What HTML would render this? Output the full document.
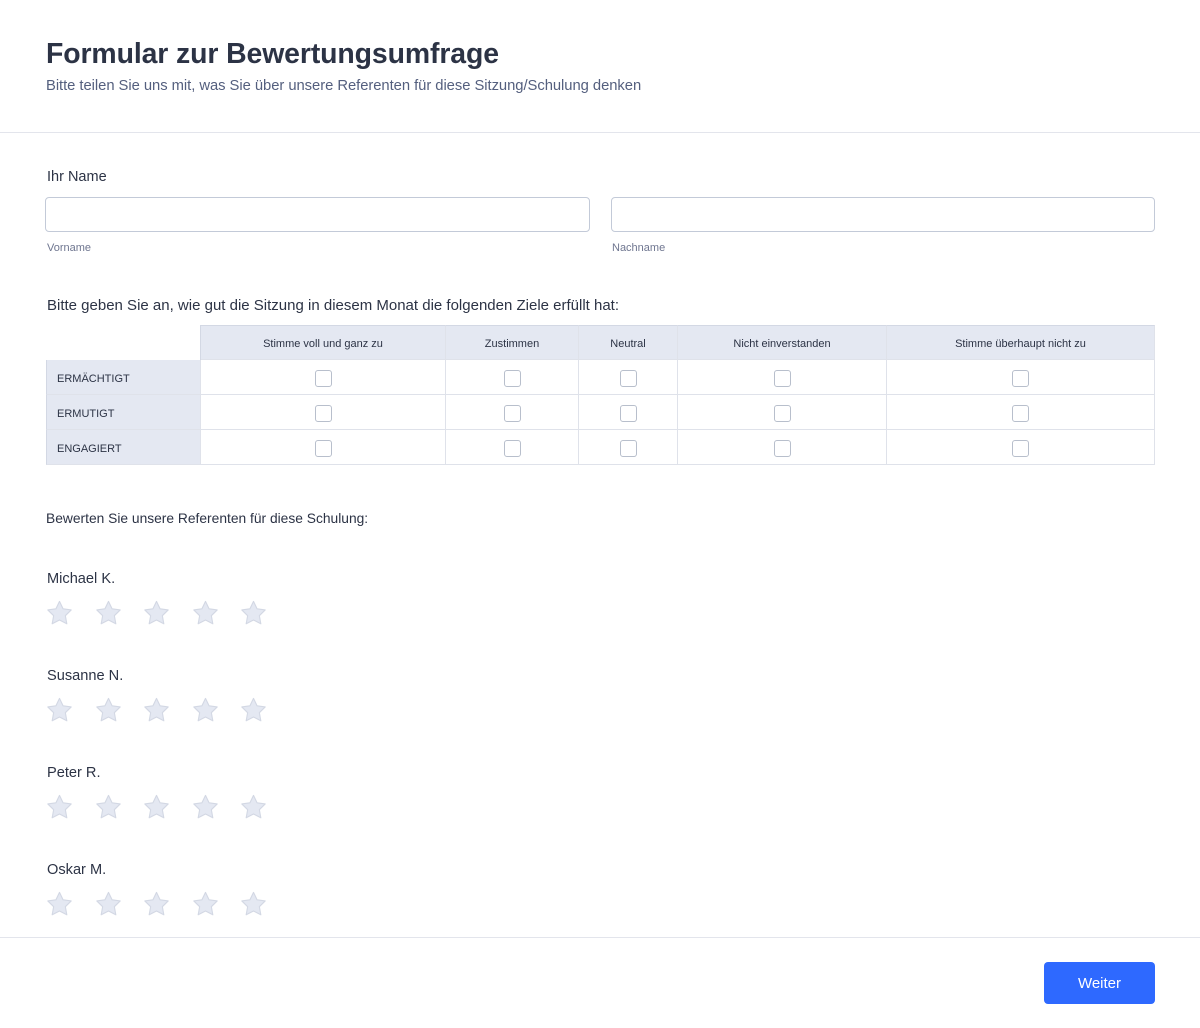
<!DOCTYPE html><html><head><meta charset="utf-8"><style>
*{box-sizing:border-box;margin:0;padding:0}
body{width:1200px;height:1028px;background:#fff;font-family:"Liberation Sans",sans-serif;color:#2c3345;position:relative;overflow:hidden}
.a{position:absolute}
h1{position:absolute;left:46px;top:38px;font-size:28.4px;font-weight:bold;color:#2c3345;letter-spacing:-0.1px}
.sub{left:46px;top:78px;font-size:14.8px;color:#545f7e;letter-spacing:-0.05px}
.line{left:0;width:1200px;height:1px;background:#e3e5ec}
.in{height:35px;border:1px solid #c3cad8;border-radius:4px;top:197px;width:545px}
.sm{font-size:11px;color:#6f7690;top:242px}
.lab{font-size:15px;color:#2c3345}
table{position:absolute;left:46px;top:325px;border-collapse:separate;border-spacing:0;font-size:11px;color:#2c3345}
td{border-right:1px solid #dfe2ea;border-bottom:1px solid #dfe2ea;text-align:center;height:35px;padding-top:2px}
tr.h td{background:#e4e8f2;border-top:1px solid #d3d8e4;height:35px}
tr.h td:first-child{background:#fff;border:none;border-right:1px solid #d3d8e4}
td.r{background:#e4e8f2;text-align:left;padding-left:10px;padding-top:4px;border-left:1px solid #d3d8e4}
.cb{display:inline-block;width:17px;height:17px;border:1px solid #b8bfcc;border-radius:3px;vertical-align:middle;background:#fff}
.stars svg{margin-right:21.6px}
.btn{left:1044px;top:962px;width:111px;height:42px;background:#2e69ff;border-radius:4px;color:#fff;font-size:15px;text-align:center;line-height:43px}
</style></head><body>
<h1>Formular zur Bewertungsumfrage</h1>
<div class="a sub">Bitte teilen Sie uns mit, was Sie über unsere Referenten für diese Sitzung/Schulung denken</div>
<div class="a line" style="top:132px"></div>
<div class="a lab" style="left:47px;top:169px;font-size:14.5px">Ihr Name</div>
<div class="a in" style="left:45px"></div>
<div class="a in" style="left:611px;width:544px"></div>
<div class="a sm" style="left:47px">Vorname</div>
<div class="a sm" style="left:612px">Nachname</div>
<div class="a lab" style="left:47px;top:297px">Bitte geben Sie an, wie gut die Sitzung in diesem Monat die folgenden Ziele erfüllt hat:</div>
<table>
<tr class="h"><td style="width:155px"></td><td style="width:245px">Stimme voll und ganz zu</td><td style="width:133px">Zustimmen</td><td style="width:99px">Neutral</td><td style="width:209px">Nicht einverstanden</td><td style="width:268px">Stimme überhaupt nicht zu</td></tr>
<tr><td class="r">ERMÄCHTIGT</td><td><span class="cb"></span></td><td><span class="cb"></span></td><td><span class="cb"></span></td><td><span class="cb"></span></td><td><span class="cb"></span></td></tr>
<tr><td class="r">ERMUTIGT</td><td><span class="cb"></span></td><td><span class="cb"></span></td><td><span class="cb"></span></td><td><span class="cb"></span></td><td><span class="cb"></span></td></tr>
<tr><td class="r">ENGAGIERT</td><td><span class="cb"></span></td><td><span class="cb"></span></td><td><span class="cb"></span></td><td><span class="cb"></span></td><td><span class="cb"></span></td></tr>
</table>
<div class="a" style="left:46px;top:511px;font-size:13.8px;color:#2c3345">Bewerten Sie unsere Referenten für diese Schulung:</div>
<div id="s"></div>
<div class="a line" style="top:937px"></div>
<div class="a btn">Weiter</div>
<script>
var names=["Michael K.","Susanne N.","Peter R.","Oskar M."],h="";
var st='<svg width="27" height="26" viewBox="0 0 24 23"><path d="M12 1.2l3.2 6.6 7.2 1-5.2 5.1 1.3 7.2L12 17.7l-6.5 3.4 1.3-7.2L1.6 8.8l7.2-1z" fill="#e4e8f2" stroke="#d3d8e4" stroke-width="1" stroke-linejoin="round"/></svg>';
names.forEach(function(n,i){var t=571+i*97;h+='<div class="a lab" style="left:47px;top:'+t+'px;font-size:14.6px">'+n+'</div><div class="a stars" style="left:46px;top:'+(t+29)+'px;display:flex">'+st+st+st+st+st+'</div>';});
document.getElementById('s').innerHTML=h;
</script>
</body></html>
